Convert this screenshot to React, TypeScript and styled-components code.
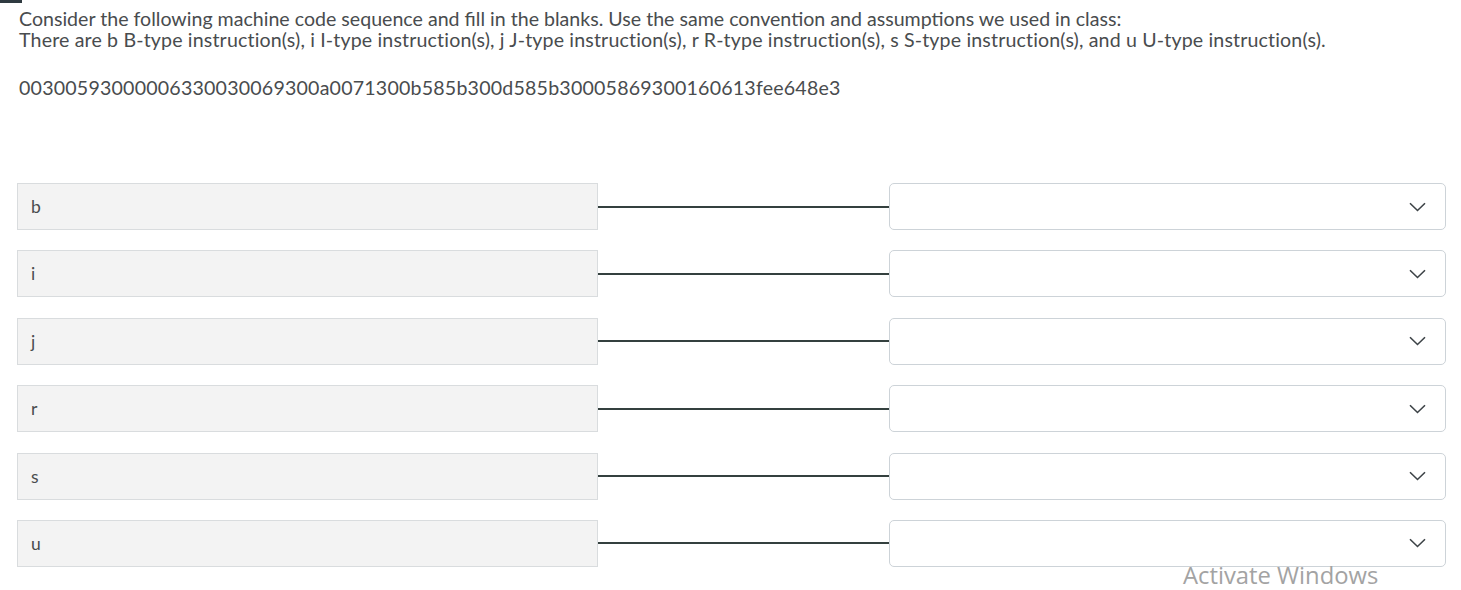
import styled, { createGlobalStyle } from "styled-components";

const Global = createGlobalStyle`
  body {
    margin: 0;
    background: #ffffff;
    font-family: Lato, "Open Sans", sans-serif;
  }
`;

const Page = styled.div`
  position: relative;
  width: 1461px;
  height: 590px;
  overflow: hidden;
  background: #fff;
`;

const TopMark = styled.div`
  position: absolute;
  top: 0;
  left: 0;
  width: 22px;
  height: 3px;
  background: #2f3a40;
`;

const Question = styled.div`
  padding: 8px 0 0 19px;
  color: #494c4e;
  font-size: 19.6px;
  line-height: 21px;
  white-space: nowrap;
`;

const Line = styled.p<{ $spread?: number }>`
  margin: 0;
  letter-spacing: ${(p) => p.$spread ?? 0}px;
`;

const Code = styled.p`
  margin: 27px 0 0;
  letter-spacing: 0.2px;
`;

const Matches = styled.div`
  display: grid;
  row-gap: 20.4px;
  margin: 85px 0 0 17px;
  width: 1430px;
`;

const Row = styled.div`
  display: flex;
  align-items: center;
  height: 47px;
`;

const Term = styled.div`
  box-sizing: border-box;
  width: 581px;
  height: 47px;
  display: flex;
  align-items: center;
  padding-left: 13px;
  background: #f3f3f3;
  border: 1px solid #d9dcde;
  color: #494c4e;
  font-size: 17.5px;
`;

const Connector = styled.div`
  flex: 0 0 291px;
  height: 2px;
  background: #34403f;
`;

const Choice = styled.div`
  box-sizing: border-box;
  width: 557px;
  height: 47px;
  display: flex;
  align-items: center;
  justify-content: flex-end;
  padding-right: 19px;
  background: #fff;
  border: 1px solid #cdd3d8;
  border-radius: 5px;
`;

const Watermark = styled.div`
  position: absolute;
  left: 1183px;
  top: 559px;
  color: #a3a3a3;
  font-family: "Open Sans", "Liberation Sans", sans-serif;
  font-size: 23.8px;
  line-height: 32px;
`;

const Chevron = () => (
  <svg width="17" height="10" viewBox="0 0 17 10" fill="none">
    <path d="M1 1.2 L8.5 8.5 L16 1.2" stroke="#3d4347" strokeWidth="1.6" />
  </svg>
);

const terms = ["b", "i", "j", "r", "s", "u"];

const machineCode = "00300593000006330030069300a0071300b585b300d585b30005869300160613fee648e3";

export default function App() {
  return (
    <Page>
      <Global />
      <TopMark />
      <Question>
        <Line>
          Consider the following machine code sequence and fill in the blanks. Use the same convention and
          assumptions we used in class:
        </Line>
        <Line $spread={0.15}>
          There are b B-type instruction(s), i I-type instruction(s), j J-type instruction(s), r R-type
          instruction(s), s S-type instruction(s), and u U-type instruction(s).
        </Line>
        <Code>{machineCode}</Code>
      </Question>
      <Matches>
        {terms.map((t) => (
          <Row key={t}>
            <Term>{t}</Term>
            <Connector />
            <Choice>
              <Chevron />
            </Choice>
          </Row>
        ))}
      </Matches>
      <Watermark>Activate Windows</Watermark>
    </Page>
  );
}
